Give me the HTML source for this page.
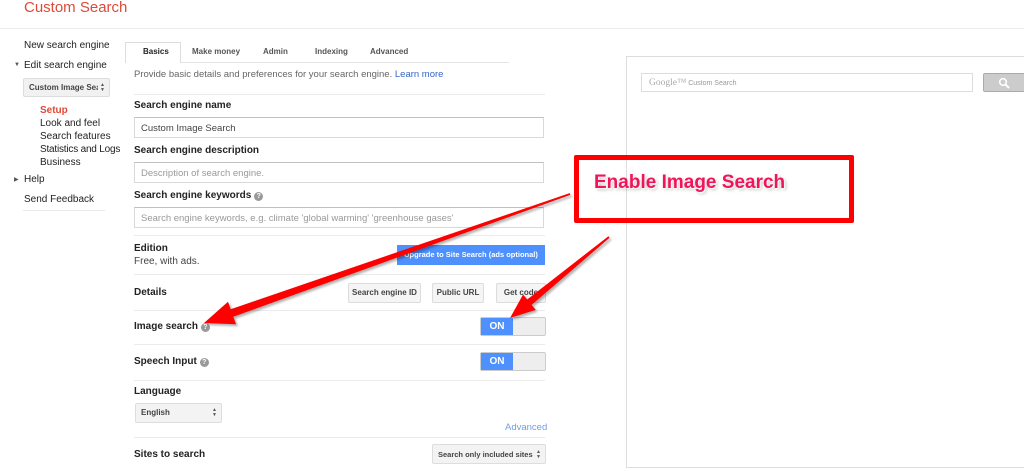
<!DOCTYPE html>
<html><head><meta charset="utf-8"><style>
*{margin:0;padding:0;box-sizing:border-box}
body{width:1024px;height:471px;overflow:hidden;background:#fff;font-family:"Liberation Sans",Arial,sans-serif;color:#222;position:relative;font-size:11px}
.a{position:absolute;white-space:nowrap}
.hl{position:absolute;height:1px;background:#ebebeb}
.lbl{font-weight:bold;font-size:10px;color:#222}
.inp{position:absolute;border:1px solid #d9d9d9;border-top-color:#c0c0c0;height:21px;left:134px;width:410px;font-size:9.5px;color:#999;padding:5px 6px;white-space:nowrap}
.btn{position:absolute;background:#f5f5f5;border:1px solid #dcdcdc;border-radius:2px;font-size:8px;font-weight:bold;color:#444;text-align:center;line-height:18px;height:20px;white-space:nowrap;overflow:hidden}
.tog{position:absolute;left:480px;width:66px;height:19px;border:1px solid #ccc;background:#eee;border-radius:2px}
.tog b{position:absolute;left:0;top:0;width:32px;height:17px;background:#4d90fe;color:#fff;font-size:10px;text-align:center;line-height:17px}
.q{display:inline-block;width:9px;height:9px;border-radius:50%;background:#999;color:#fff;font-size:7px;text-align:center;line-height:9px;vertical-align:0px;margin-left:3px}
.nav{font-size:10px;color:#222}
.sp{position:absolute;right:4px;top:4px;font-size:5px;line-height:5px;color:#555}
</style></head><body>
<div class="a" style="left:24px;top:0;font-size:15px;color:#dd4b39;line-height:16px">Custom Search</div>
<div class="hl" style="left:0;top:28px;width:1024px"></div>

<div class="a nav" style="left:24px;top:40px">New search engine</div>
<div class="a nav" style="left:14px;top:62px;font-size:6px;color:#555">▼</div>
<div class="a nav" style="left:24px;top:60px">Edit search engine</div>
<div class="a" style="left:23px;top:78px;width:87px;height:19px;background:#f1f1f1;border:1px solid #ddd;border-radius:2px;font-size:8px;font-weight:bold;color:#444;padding:4px 5px;overflow:hidden">Custom Image Sea<span class="sp" style="background:#f1f1f1;padding-left:2px">▲<br>▼</span></div>
<div class="a nav" style="left:40px;top:105px;color:#dd4b39;font-weight:bold">Setup</div>
<div class="a nav" style="left:40px;top:118px">Look and feel</div>
<div class="a nav" style="left:40px;top:131px">Search features</div>
<div class="a nav" style="left:40px;top:144px;letter-spacing:-0.2px">Statistics and Logs</div>
<div class="a nav" style="left:40px;top:157px">Business</div>
<div class="a nav" style="left:14px;top:176px;font-size:6px;color:#555">▶</div>
<div class="a nav" style="left:24px;top:174px">Help</div>
<div class="a nav" style="left:24px;top:194px">Send Feedback</div>
<div class="hl" style="left:23px;top:210px;width:82px"></div>

<div class="a" style="left:125px;top:42px;width:56px;height:21px;border:1px solid #ddd;border-bottom:none;background:#fff;z-index:2"></div>
<div class="hl" style="left:125px;top:62px;width:384px;background:#e5e5e5"></div>
<div class="a" style="left:143px;top:47px;font-size:8px;font-weight:bold;z-index:3">Basics</div>
<div class="a" style="left:192px;top:47px;font-size:8px;font-weight:bold;color:#555">Make money</div>
<div class="a" style="left:263px;top:47px;font-size:8px;font-weight:bold;color:#555">Admin</div>
<div class="a" style="left:315px;top:47px;font-size:8px;font-weight:bold;color:#555">Indexing</div>
<div class="a" style="left:370px;top:47px;font-size:8px;font-weight:bold;color:#555">Advanced</div>
<div class="a" style="left:134px;top:69px;font-size:9.5px;color:#666">Provide basic details and preferences for your search engine. <span style="color:#3366cc">Learn more</span></div>
<div class="hl" style="left:134px;top:94px;width:411px"></div>

<div class="a lbl" style="left:134px;top:100px">Search engine name</div>
<div class="inp" style="top:117px;color:#444">Custom Image Search</div>
<div class="a lbl" style="left:134px;top:145px">Search engine description</div>
<div class="inp" style="top:162px">Description of search engine.</div>
<div class="a lbl" style="left:134px;top:190px">Search engine keywords<span class="q">?</span></div>
<div class="inp" style="top:207px">Search engine keywords, e.g. climate 'global warming' 'greenhouse gases'</div>
<div class="hl" style="left:134px;top:235px;width:411px"></div>

<div class="a lbl" style="left:134px;top:243px">Edition</div>
<div class="a" style="left:134px;top:256px;font-size:10px;color:#444">Free, with ads.</div>
<div class="a" style="left:397px;top:245px;width:148px;height:20px;background:#4d90fe;color:#fff;font-size:7.5px;font-weight:bold;text-align:center;line-height:20px;overflow:hidden">Upgrade to Site Search (ads optional)</div>
<div class="hl" style="left:134px;top:274px;width:411px"></div>

<div class="a lbl" style="left:134px;top:287px">Details</div>
<div class="btn" style="left:348px;top:283px;width:73px">Search engine ID</div>
<div class="btn" style="left:432px;top:283px;width:52px">Public URL</div>
<div class="btn" style="left:496px;top:283px;width:50px">Get code</div>
<div class="hl" style="left:134px;top:310px;width:411px"></div>

<div class="a lbl" style="left:134px;top:321px">Image search<span class="q">?</span></div>
<div class="tog" style="top:317px"><b>ON</b></div>
<div class="hl" style="left:134px;top:344px;width:411px"></div>
<div class="a lbl" style="left:134px;top:356px">Speech Input<span class="q">?</span></div>
<div class="tog" style="top:352px"><b>ON</b></div>
<div class="hl" style="left:134px;top:380px;width:411px"></div>
<div class="a lbl" style="left:134px;top:386px">Language</div>
<div class="a" style="left:135px;top:403px;width:87px;height:20px;background:#f3f3f3;border:1px solid #ddd;border-radius:2px;font-size:8px;font-weight:bold;color:#444;padding:4px 5px">English<span class="sp">▲<br>▼</span></div>
<div class="a" style="left:505px;top:422px;font-size:9.5px;color:#6d9eeb">Advanced</div>
<div class="hl" style="left:134px;top:437px;width:411px"></div>
<div class="a lbl" style="left:134px;top:449px">Sites to search</div>
<div class="a" style="left:432px;top:444px;width:114px;height:20px;background:#f3f3f3;border:1px solid #ddd;border-radius:2px;font-size:7.5px;font-weight:bold;color:#444;padding:5px 5px">Search only included sites<span class="sp" style="top:5px">▲<br>▼</span></div>

<div class="a" style="left:626px;top:56px;width:400px;height:412px;border:1px solid #ddd"></div>
<div class="a" style="left:641px;top:73px;width:332px;height:19px;border:1px solid #ddd;font-size:7px;color:#999;padding:4px 7px"><span style="font-family:'Liberation Serif',serif;font-size:9.5px;color:#aaa">Google™</span> Custom Search</div>
<div class="a" style="left:983px;top:73px;width:45px;height:19px;background:#ccc;border:1px solid #aaa;border-radius:2px"><svg width="12" height="12" style="position:absolute;left:14px;top:3px"><circle cx="5" cy="5" r="3.3" fill="none" stroke="#fff" stroke-width="1.6"/><line x1="7.5" y1="7.5" x2="11" y2="11" stroke="#fff" stroke-width="2"/></svg></div>

<div class="a" style="left:574px;top:155px;width:280px;height:68px;border:5px solid #ff0000;border-radius:2px"></div>
<div class="a" style="left:594px;top:172px;font-size:19px;font-weight:bold;color:#f0145a;text-shadow:1px 1px 1px #fff,2px 2px 3px rgba(0,0,0,.25)">Enable Image Search</div>

<svg class="a" style="left:0;top:0" width="1024" height="471">
<g fill="#f00" style="filter:drop-shadow(2px 2px 1px rgba(0,0,0,.3))">
<polygon points="569.7,193.1 230.7,309.2 228,301.7 204,323 236,324.3 233.3,316.8 570.3,194.9"/>
<polygon points="608.4,236.2 527.2,299.5 523.1,294.5 510,318 535.7,309.9 531.6,304.9 609.6,237.8"/>
</g></svg>
</body></html>
